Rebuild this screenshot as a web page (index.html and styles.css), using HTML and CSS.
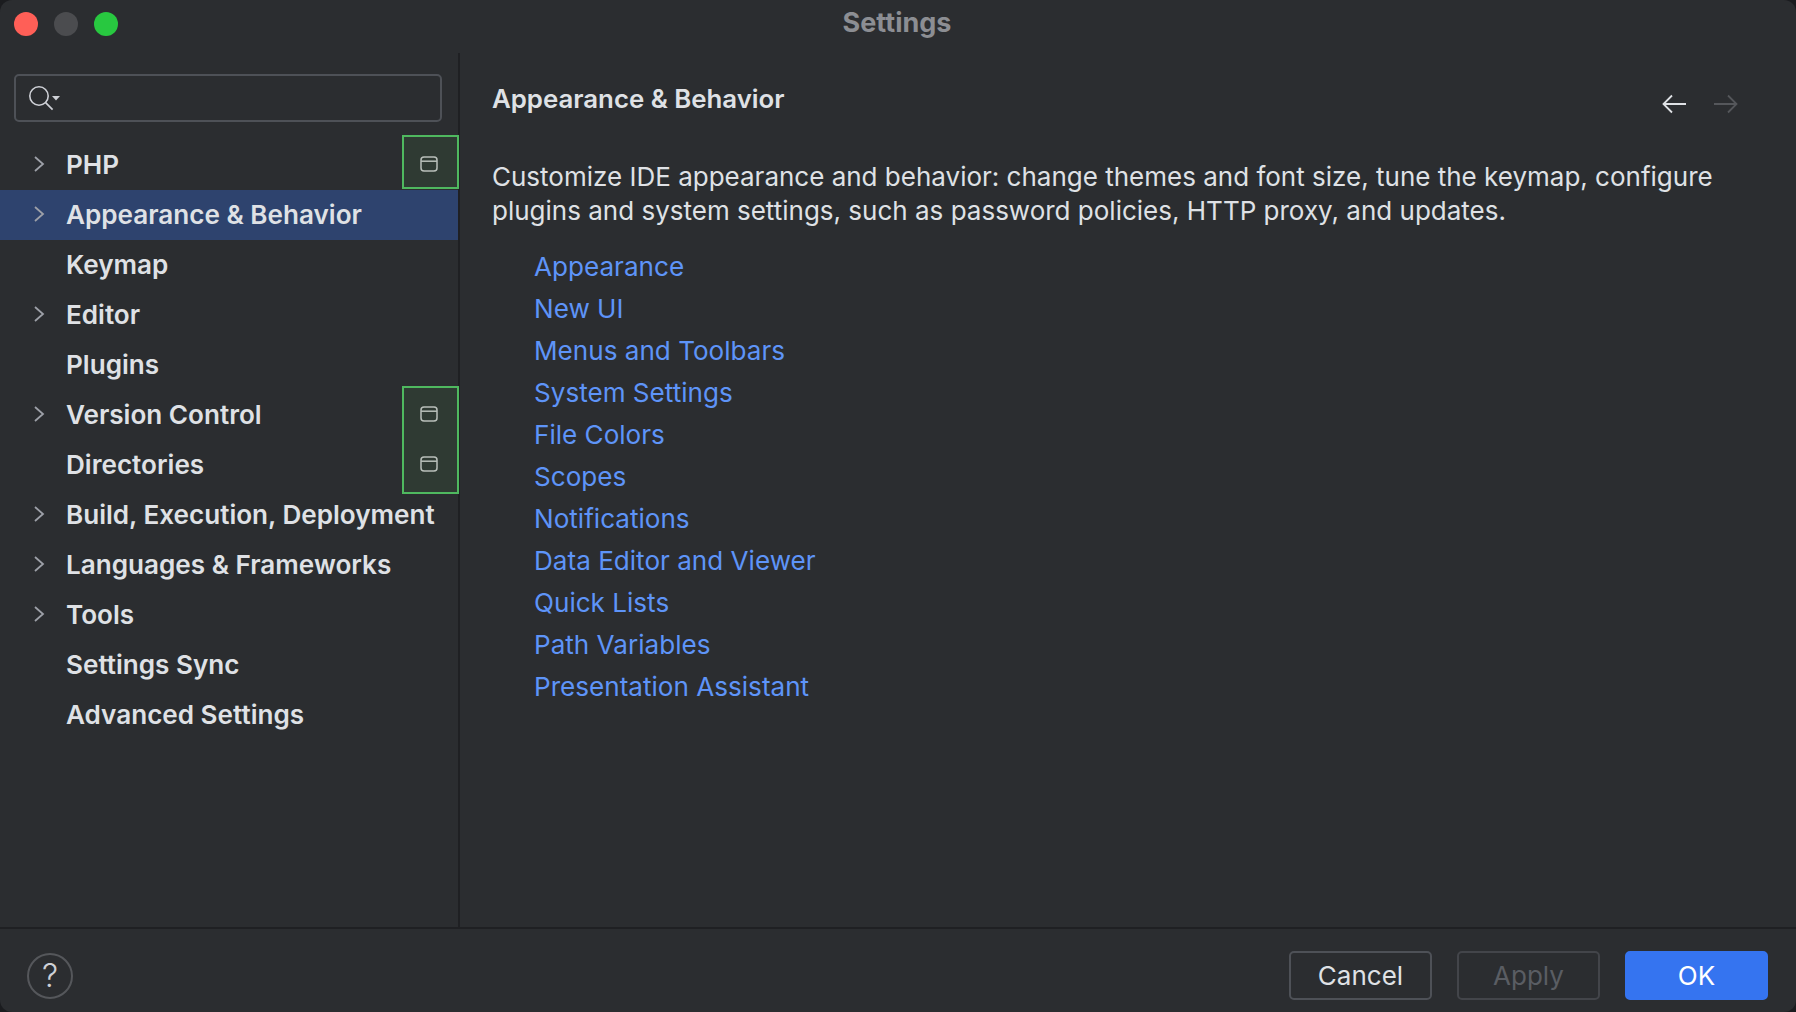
FILE: index.html
```html
<!DOCTYPE html>

<html>
<head>
  <meta charset="utf-8">
  <title>Settings</title>
  <link rel="stylesheet" href="styles.css">
</head>
<body>
  <div class="window">
    <div class="titlebar">
      <div class="lights">
        <span class="light light-close"></span>
        <span class="light light-min"></span>
        <span class="light light-max"></span>
      </div>
      <div class="window-title">Settings</div>
    </div>

    <div class="main">
      <div class="sidebar">
        <div class="search">
          <svg class="search-icon" viewBox="0 0 32 28" fill="none" stroke="currentColor" stroke-width="1.6">
            <circle cx="11" cy="11" r="9.2"/>
            <line x1="17.6" y1="17.6" x2="24.6" y2="24.6"/>
            <polygon points="24,11 32,11 28,15.5" fill="currentColor" stroke="none"/>
          </svg>
        </div>

        <div class="tree">
          <div class="row">
            <svg class="chevron" viewBox="0 0 12 18" fill="none" stroke="currentColor" stroke-width="1.8"><path d="M2 2l8 7-8 7"/></svg>
            <span>PHP</span>
          </div>
          <div class="row selected">
            <svg class="chevron" viewBox="0 0 12 18" fill="none" stroke="currentColor" stroke-width="1.8"><path d="M2 2l8 7-8 7"/></svg>
            <span>Appearance &amp; Behavior</span>
          </div>
          <div class="row leaf"><span>Keymap</span></div>
          <div class="row">
            <svg class="chevron" viewBox="0 0 12 18" fill="none" stroke="currentColor" stroke-width="1.8"><path d="M2 2l8 7-8 7"/></svg>
            <span>Editor</span>
          </div>
          <div class="row leaf"><span>Plugins</span></div>
          <div class="row">
            <svg class="chevron" viewBox="0 0 12 18" fill="none" stroke="currentColor" stroke-width="1.8"><path d="M2 2l8 7-8 7"/></svg>
            <span>Version Control</span>
          </div>
          <div class="row leaf"><span>Directories</span></div>
          <div class="row">
            <svg class="chevron" viewBox="0 0 12 18" fill="none" stroke="currentColor" stroke-width="1.8"><path d="M2 2l8 7-8 7"/></svg>
            <span>Build, Execution, Deployment</span>
          </div>
          <div class="row">
            <svg class="chevron" viewBox="0 0 12 18" fill="none" stroke="currentColor" stroke-width="1.8"><path d="M2 2l8 7-8 7"/></svg>
            <span>Languages &amp; Frameworks</span>
          </div>
          <div class="row">
            <svg class="chevron" viewBox="0 0 12 18" fill="none" stroke="currentColor" stroke-width="1.8"><path d="M2 2l8 7-8 7"/></svg>
            <span>Tools</span>
          </div>
          <div class="row leaf"><span>Settings Sync</span></div>
          <div class="row leaf"><span>Advanced Settings</span></div>

          <div class="gutter gutter-php">
            <svg class="gutter-icon" viewBox="0 0 18 16" fill="none" stroke="currentColor" stroke-width="1.5"><rect x="1" y="1" width="16" height="14" rx="3"/><line x1="1" y1="5.2" x2="17" y2="5.2"/></svg>
          </div>
          <div class="gutter gutter-vcs">
            <svg class="gutter-icon" viewBox="0 0 18 16" fill="none" stroke="currentColor" stroke-width="1.5"><rect x="1" y="1" width="16" height="14" rx="3"/><line x1="1" y1="5.2" x2="17" y2="5.2"/></svg>
            <svg class="gutter-icon" viewBox="0 0 18 16" fill="none" stroke="currentColor" stroke-width="1.5"><rect x="1" y="1" width="16" height="14" rx="3"/><line x1="1" y1="5.2" x2="17" y2="5.2"/></svg>
          </div>
        </div>
      </div>

      <div class="content">
        <div class="content-head">
          <h1>Appearance &amp; Behavior</h1>
          <div class="nav-arrows">
            <svg class="arrow" viewBox="0 0 24 20" fill="none" stroke="currentColor" stroke-width="1.8"><path d="M24 10H1.5M10 1.5L1.5 10l8.5 8.5"/></svg>
            <svg class="arrow arrow-off" viewBox="0 0 24 20" fill="none" stroke="currentColor" stroke-width="1.8"><path d="M0 10h22.5M14 1.5l8.5 8.5-8.5 8.5"/></svg>
          </div>
        </div>
        <p class="description">Customize IDE appearance and behavior: change themes and font size, tune the keymap, configure plugins and system settings, such as password policies, HTTP proxy, and updates.</p>
        <div class="links">
          <a>Appearance</a>
          <a>New UI</a>
          <a>Menus and Toolbars</a>
          <a>System Settings</a>
          <a>File Colors</a>
          <a>Scopes</a>
          <a>Notifications</a>
          <a>Data Editor and Viewer</a>
          <a>Quick Lists</a>
          <a>Path Variables</a>
          <a>Presentation Assistant</a>
        </div>
      </div>
    </div>

    <div class="footer">
      <div class="help">?</div>
      <div class="buttons">
        <button class="btn">Cancel</button>
        <button class="btn btn-off">Apply</button>
        <button class="btn btn-ok">OK</button>
      </div>
    </div>
  </div>
</body>
</html>
```

FILE: styles.css
```css
html, body {
  margin: 0;
  height: 100%;
  background: #1b1c1f;
}
body {
  font-family: Inter, "Noto Sans", sans-serif;
  color: #dfe1e5;
  overflow: hidden;
}
.window {
  height: 1012px;
  display: flex;
  flex-direction: column;
  background: #2b2d30;
  border-radius: 12px;
  overflow: hidden;
}

/* Title bar */
.titlebar {
  height: 53px;
  flex: none;
  display: flex;
  align-items: center;
  justify-content: center;
  position: relative;
}
.lights {
  position: absolute;
  left: 14px;
  top: 12px;
  display: flex;
  gap: 16px;
}
.light {
  width: 24px;
  height: 24px;
  border-radius: 50%;
}
.light-close { background: #ff5f57; }
.light-min { background: #4b4c4f; }
.light-max { background: #28c840; }
.window-title {
  font-size: 27px;
  font-weight: 700;
  color: #8c8e93;
  margin-top: -8px;
  margin-right: 2px;
}

/* Main area */
.main {
  flex: 1;
  display: flex;
  min-height: 0;
}
.sidebar {
  width: 458px;
  flex: none;
  border-right: 2px solid #1f2023;
}
.search {
  height: 44px;
  margin: 21px 16px 0 14px;
  border: 2px solid #4e5157;
  border-radius: 5px;
  display: flex;
  align-items: center;
  padding-left: 12px;
  color: #ced0d6;
}
.search-icon {
  width: 32px;
  height: 28px;
  margin-top: 2px;
}
.tree {
  position: relative;
  margin-top: 18px;
}
.row {
  height: 50px;
  box-sizing: border-box;
  display: flex;
  align-items: center;
  padding-left: 33px;
  padding-bottom: 2px;
  gap: 21px;
  font-size: 26.1px;
  font-weight: 600;
  white-space: nowrap;
}
.row.leaf {
  padding-left: 66px;
}
.row.selected {
  background: #2e436e;
}
.chevron {
  width: 12px;
  height: 18px;
  flex: none;
  color: #9da0a8;
}

/* Green gutter marks over the tree */
.gutter {
  position: absolute;
  right: -1px;
  width: 57px;
  box-sizing: border-box;
  border: 2px solid #4fb85f;
  background: #2f3a33;
  display: flex;
  flex-direction: column;
  align-items: center;
  color: #b9bfba;
  padding-right: 3px;
}
.gutter-php {
  top: -5px;
  height: 54px;
  padding-top: 19px;
}
.gutter-vcs {
  top: 246px;
  height: 108px;
  padding-top: 18px;
  gap: 34px;
}
.gutter-icon {
  width: 18px;
  height: 16px;
}

/* Right side */
.content {
  flex: 1;
  min-width: 0;
  padding-left: 32px;
  padding-right: 58px;
}
.content-head {
  display: flex;
  justify-content: space-between;
  align-items: center;
  height: 44px;
  margin-top: 24px;
}
h1 {
  margin: 0;
  font-size: 25.8px;
  font-weight: 600;
  position: relative;
  top: -1px;
}
.nav-arrows {
  display: flex;
  gap: 28px;
  margin-top: 10px;
}
.arrow {
  width: 24px;
  height: 20px;
  color: #dfe1e5;
}
.arrow-off {
  color: #55575b;
}
.description {
  margin: 39px 0 0;
  font-size: 26px;
  line-height: 34px;
}
.links {
  display: flex;
  flex-direction: column;
  align-items: flex-start;
  margin-top: 18px;
  padding-left: 42px;
}
.links a {
  height: 42px;
  line-height: 42px;
  font-size: 26.1px;
  color: #5e94f8;
  white-space: nowrap;
}

/* Footer */
.footer {
  height: 85px;
  flex: none;
  box-sizing: border-box;
  border-top: 2px solid #1f2023;
  display: flex;
  align-items: center;
  justify-content: space-between;
  padding: 10px 28px 0 27px;
}
.help {
  width: 46px;
  height: 46px;
  box-sizing: border-box;
  border: 2px solid #55575b;
  border-radius: 50%;
  display: flex;
  align-items: center;
  justify-content: center;
  font-size: 32px;
  font-weight: 300;
  color: #ced0d6;
}
.buttons {
  display: flex;
  gap: 25px;
}
.btn {
  width: 143px;
  height: 49px;
  box-sizing: border-box;
  border: 2px solid #4e5157;
  border-radius: 5px;
  background: transparent;
  color: #dfe1e5;
  font-family: Inter, "Noto Sans", sans-serif;
  font-size: 26px;
  padding: 0;
}
.btn-off {
  border-color: #43454a;
  color: #5a5d63;
}
.btn-ok {
  border-color: #3574f0;
  background: #3574f0;
  color: #fff;
}
```
